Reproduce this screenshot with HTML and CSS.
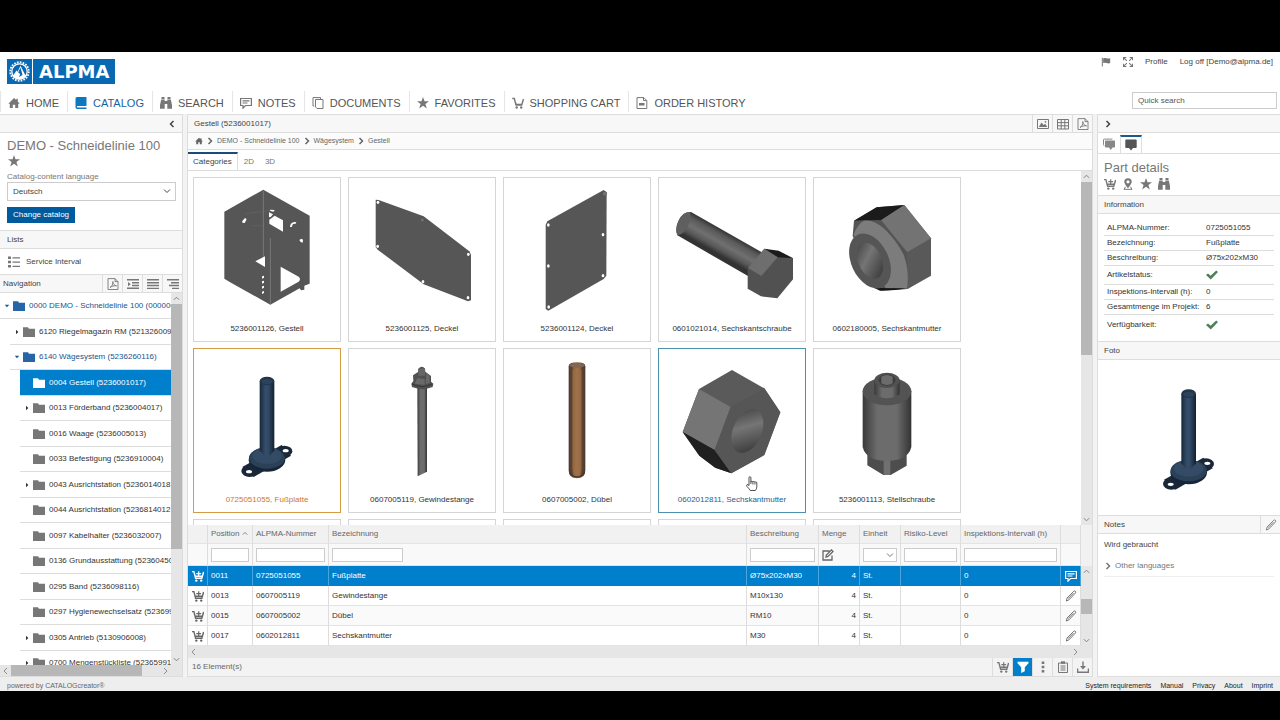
FILE: index.html
```html
<!DOCTYPE html>
<html lang="en">
<head>
<meta charset="utf-8">
<meta name="viewport" content="width=device-width, initial-scale=1">
<title>ALPMA Catalog</title>
<link rel="stylesheet" href="styles.css">
</head>
<body>
<svg class="defs" aria-hidden="true">
  <defs>
    <linearGradient id="shade" x1="0" x2="1"><stop offset="0" stop-color="#3a3a3a"/><stop offset=".3" stop-color="#6c6c6c"/><stop offset=".7" stop-color="#6c6c6c"/><stop offset="1" stop-color="#333"/></linearGradient>
    <linearGradient id="navy" x1="0" x2="1"><stop offset="0" stop-color="#18283b"/><stop offset=".4" stop-color="#344f6b"/><stop offset=".6" stop-color="#314a65"/><stop offset="1" stop-color="#121f30"/></linearGradient>
    <linearGradient id="wood" x1="0" x2="1"><stop offset="0" stop-color="#4a382d"/><stop offset=".22" stop-color="#634634"/><stop offset=".3" stop-color="#8f623f"/><stop offset=".5" stop-color="#a0714a"/><stop offset=".7" stop-color="#8f623f"/><stop offset=".78" stop-color="#634634"/><stop offset="1" stop-color="#4a382d"/></linearGradient>
    <linearGradient id="bolt" gradientUnits="userSpaceOnUse" x1="686" y1="186" x2="650" y2="250"><stop offset="0" stop-color="#2c2c2c"/><stop offset=".25" stop-color="#5a5a5a"/><stop offset=".55" stop-color="#707070"/><stop offset=".8" stop-color="#585858"/><stop offset="1" stop-color="#333"/></linearGradient>
    <linearGradient id="bore" x1="0" y1="0" x2=".5" y2="1"><stop offset="0" stop-color="#3c3c3c"/><stop offset=".5" stop-color="#757575"/><stop offset="1" stop-color="#444"/></linearGradient>
  </defs>
  <symbol id="home" viewBox="0 0 12 12"><path d="M6 1 .3 6.8h1.5V11h3V7.8h2.4V11h3V6.8h1.5L9.8 4.4V1.8H8.300v1.100z"/></symbol>
  <symbol id="book" viewBox="0 0 12 12"><path d="M2 0h9.500v9H2.600q-.8 0-.8.7t.8.7h8.900V12H2.200Q.5 12 .5 10.300V1.600Q.5 0 2 0z"/></symbol>
  <symbol id="binoc" viewBox="0 0 12 12"><path d="M1.500 0h3v2h-3zM7.500 0h3v2h-3zM1.200 2.600h3.500V4h2.600V2.600h3.500L12 8v3.800H7.300V7H4.700v4.800H0V8z"/></symbol>
  <symbol id="note" viewBox="0 0 12 12"><path d="M.6 1.500h10.800v7H5.500L3 11.200V8.500H.6zM2.500 3.800h7M2.500 6h5" fill="none" stroke="currentColor" stroke-width="1.200"/></symbol>
  <symbol id="docs" viewBox="0 0 12 12"><path d="M3.500 2.500H11v9H5L3.500 9.800zM2.200 9H1V.6h7.500v1.700" fill="none" stroke="currentColor"/></symbol>
  <symbol id="star" viewBox="0 0 12 12"><path d="m6 0 1.500 4.300H12L8.400 7l1.400 4.500L6 8.700l-3.800 2.800L3.600 7 0 4.300h4.500z"/></symbol>
  <symbol id="cart" viewBox="0 0 12 12"><path d="M.3 1.500h2l1.700 6.500h5.700L11.500 2M3.500 5.500l.6 2h5" fill="none" stroke="currentColor" stroke-width="1.400"/><circle cx="4.700" cy="10.500" r="1.200"/><circle cx="9.200" cy="10.500" r="1.200"/></symbol>
  <symbol id="cartadd" viewBox="0 0 12 12"><path d="M0 1.600h1.900l1.700 6.700h6.200L11.600 2M3 6.300h7.200" fill="none" stroke="currentColor" stroke-width="1.400"/><path d="M4.300 3.700h4.800M6.700 1.300v4.600" fill="none" stroke="currentColor" stroke-width="1.200"/><circle cx="4.300" cy="10.600" r="1.200"/><circle cx="9.200" cy="10.600" r="1.200"/></symbol>
  <symbol id="order" viewBox="0 0 12 12"><path d="M1 .6h6.800l3 3v7.900H1zM7.500.6v3h3" fill="none" stroke="currentColor"/><path d="M3 6h5.500v2.500H3z"/></symbol>
  <symbol id="flag" viewBox="0 0 12 12"><path d="M1 1h1.200v10.500H1zM2.600 1.500q2.200-.8 4.200 0t4.200 0v5.800q-2.200.8-4.200 0t-4.200 0z"/></symbol>
  <symbol id="expand" viewBox="0 0 12 12"><path d="M.6 4V.6H4M8 .6h3.400V4M11.400 8v3.400H8M4 11.400H.6V8M1 1l3.600 3.600M11 1 7.400 4.600M11 11 7.400 7.400M1 11l3.600-3.600" fill="none" stroke="currentColor" stroke-width="1.300"/></symbol>
  <symbol id="folder" viewBox="0 0 12 10"><path d="M0 .3h5l1 1.500h6V10H0z"/></symbol>
  <symbol id="pdf" viewBox="0 0 12 12"><path d="M1 .6h7l3 3v7.900H1zM8 .6v3h3M3 9.500c2-.8 3-3.500 2.800-6 .2 2.500 1.500 4 3.700 4.300C7 7.600 5 8 3 9.500" fill="none" stroke="currentColor" stroke-width=".9"/></symbol>
  <symbol id="indent" viewBox="0 0 12 12"><path d="M0 1h12v1.500H0zM5 4h7v1.500H5zM5 6.800h7v1.500H5zM0 9.600h12v1.500H0zM1 4l2.800 2.200L1 8.300z"/></symbol>
  <symbol id="lines" viewBox="0 0 12 12"><path d="M0 1h12v1.400H0zM0 4h12v1.400H0zM0 6.800h12v1.400H0zM0 9.700h12v1.400H0z"/></symbol>
  <symbol id="outdent" viewBox="0 0 12 12"><path d="M0 1h12v1.400H0zM4 4h8v1.400H4zM2 6.800h10v1.400H2zM5 9.700h7v1.400H5z"/></symbol>
  <symbol id="list" viewBox="0 0 12 12"><path d="M0 .5h3v2.600H0zM0 4.700h3v2.600H0zM0 8.900h3v2.600H0zM4.500 1.300H12v1.200H4.500zM4.500 5.500H12v1.200H4.500zM4.500 9.700H12v1.200H4.500z"/></symbol>
  <symbol id="image" viewBox="0 0 12 12"><path d="M.5 1.500h11v9H.5z" fill="none" stroke="currentColor"/><path d="m1.800 9 2.700-4.500L6.700 7l1.500-1.300L10.300 9z"/><circle cx="8.500" cy="3.800" r=".9"/></symbol>
  <symbol id="grid" viewBox="0 0 12 12"><path d="M.5 1.500h11v9.500H.5zM.5 4.600h11M.5 7.800h11M4.200 1.500V11M7.800 1.500V11" fill="none" stroke="currentColor"/></symbol>
  <symbol id="bubble" viewBox="0 0 12 12"><path d="M1.200.5h9.600q.9 0 .9.900V8q0 .9-.9.9H8L6 11.500 4 8.900H1.200Q.3 8.900.3 8V1.400q0-.9.9-.9z"/></symbol>
  <symbol id="bubbles" viewBox="0 0 12 12"><path d="M2.800 2.500h8.400q.8 0 .8.800v5.500q0 .8-.8.800H9.500L7.700 12 6 9.600H2.800q-.8 0-.8-.8V3.300q0-.8.8-.8z"/><path d="M1.300 7.500Q.5 7.500.5 6.700V2q0-.9.900-.9h8" fill="none" stroke="currentColor"/></symbol>
  <symbol id="pin" viewBox="0 0 12 12"><path d="M6 .2a3.700 3.700 0 0 1 3.700 3.700C9.700 6 6 10 6 10S2.300 6 2.300 3.900A3.700 3.700 0 0 1 6 .2zm0 2a1.600 1.600 0 1 0 0 3.200 1.600 1.600 0 0 0 0-3.200z" fill-rule="evenodd"/><path d="M3.500 8.800 2 11.300h8L8.500 8.800" fill="none" stroke="currentColor"/></symbol>
  <symbol id="check" viewBox="0 0 12 12"><path d="m0 6 2-1.600 2.600 2.400L10.200 1.500 12 3 4.800 10.500z"/></symbol>
  <symbol id="pencil" viewBox="0 0 12 12"><path d="m1.300 11 .8-3L8.800 1.200q.9-.6 1.600.1.700.8.100 1.600L3.900 9.900zM3 8.700l5.500-5.500" fill="none" stroke="currentColor" stroke-width=".9"/></symbol>
  <symbol id="edit" viewBox="0 0 12 12"><path d="M7.500 2H1v9h9V6.500M4 8l.4-2L9.500.9l1.500 1.500L6 7.500z" fill="none" stroke="currentColor" stroke-width="1.300"/></symbol>
  <symbol id="filter" viewBox="0 0 12 12"><path d="M.5.700h11v1.500L7.800 6.300v4L4.200 12V6.300L.5 2.200z"/></symbol>
  <symbol id="more" viewBox="0 0 12 12"><path d="M4.700.5h2.600V3H4.700zM4.700 4.700h2.600v2.600H4.700zM4.700 9h2.600v2.500H4.700z"/></symbol>
  <symbol id="clip" viewBox="0 0 12 12"><path d="M1.500 2h9v9.500h-9zM3.500 5h5M3.500 7h5M3.500 9h5" fill="none" stroke="currentColor"/><path d="M4 .3h4v2.500H4z"/></symbol>
  <symbol id="download" viewBox="0 0 12 12"><path d="M.6 7.500v3.700h10.800V7.500M6 .5V7" fill="none" stroke="currentColor" stroke-width="1.400"/><path d="M3 5h6L6 8.500z"/></symbol>
  <symbol id="right" viewBox="0 0 6 8"><path d="m1.500 1 3 3-3 3" fill="none" stroke="currentColor" stroke-width="1.500"/></symbol>
  <symbol id="left" viewBox="0 0 6 8"><path d="m4.500 1-3 3 3 3" fill="none" stroke="currentColor" stroke-width="1.500"/></symbol>
  <symbol id="thinright" viewBox="0 0 6 8"><path d="m1.500 1 3 3-3 3" fill="none" stroke="currentColor" stroke-width=".8"/></symbol>
  <symbol id="thinleft" viewBox="0 0 6 8"><path d="m4.500 1-3 3 3 3" fill="none" stroke="currentColor" stroke-width=".8"/></symbol>
  <symbol id="up" viewBox="0 0 8 6"><path d="m1 4.500 3-3 3 3" fill="none" stroke="currentColor"/></symbol>
  <symbol id="down" viewBox="0 0 8 6"><path d="m1 1.500 3 3 3-3" fill="none" stroke="currentColor"/></symbol>
  <symbol id="closed" viewBox="0 0 6 6"><path d="m2 .8 2.400 2.200L2 5.200z"/></symbol>
  <symbol id="open" viewBox="0 0 6 6"><path d="M.8 1.800h4.400L3 4.200z"/></symbol>
  <symbol id="foot" viewBox="151 90 168 315">
    <path d="m160 368 118-66 28 32-112 64z" fill="#1a2738"/>
    <ellipse cx="182" cy="380" rx="25" ry="18" fill="#1a2738"/><ellipse cx="286" cy="321" rx="24" ry="17" fill="#1a2738"/>
    <ellipse cx="234" cy="346" rx="55" ry="36" fill="#16253a"/><ellipse cx="234" cy="341" rx="54" ry="32" fill="#2b4158"/><ellipse cx="234" cy="335" rx="44" ry="24" fill="#334b64"/>
    <ellipse cx="180" cy="382" rx="9" ry="5" fill="#fff"/><ellipse cx="290" cy="319" rx="9" ry="5" fill="#fff"/>
    <path d="M212 110v210q8 4 12 12 10 8 20 0 4-8 12-12V110z" fill="url(#navy)"/><ellipse cx="234" cy="110" rx="22" ry="13" fill="#22354a"/><ellipse cx="234" cy="112" rx="16" ry="8" fill="#2c435b"/>
  </symbol>
</svg>

<div class="app">
  <header class="top">
    <div class="brand-row">
      <a class="logo" href="#" aria-label="ALPMA">
        <svg class="logo-mark" viewBox="0 0 25 25"><circle cx="12.500" cy="12.500" r="9.300" fill="none" stroke="#fff" stroke-width="1.800" stroke-dasharray="1.700 1.220"/><circle cx="12.500" cy="12.500" r="7.700" fill="none" stroke="#fff" stroke-width="1.300"/><path d="m5.500 17.500 4-6 1.200 1.300 2.800-6 5.500 10.700q-6 6-13.500 0z" fill="#fff"/><path d="m13.500 8.500-2.300 5 2 1.500-1.200 3 3.500-2z" fill="#0868b2"/></svg>
        <span class="logo-text">ALPMA</span>
      </a>
      <div class="user-links">
        <button class="plain" aria-label="Language"><svg class="ic10"><use href="#flag"/></svg></button>
        <button class="plain" aria-label="Full screen"><svg class="ic10"><use href="#expand"/></svg></button>
        <a href="#">Profile</a><a href="#">Log off [Demo@alpma.de]</a>
      </div>
    </div>
    <div class="nav-row">
      <nav class="mainnav">
        <a href="#"><svg><use href="#home"/></svg>HOME</a>
        <a href="#" class="current"><svg><use href="#book"/></svg>CATALOG</a>
        <a href="#"><svg><use href="#binoc"/></svg>SEARCH</a>
        <a href="#"><svg><use href="#note"/></svg>NOTES</a>
        <a href="#"><svg><use href="#docs"/></svg>DOCUMENTS</a>
        <a href="#"><svg><use href="#star"/></svg>FAVORITES</a>
        <a href="#"><svg><use href="#cart"/></svg>SHOPPING CART</a>
        <a href="#"><svg><use href="#order"/></svg>ORDER HISTORY</a>
      </nav>
      <input class="quick" type="search" placeholder="Quick search" aria-label="Quick search">
    </div>
  </header>

  <main class="columns">
    <aside class="panel left">
      <div class="head end"><button class="plain cell" aria-label="Collapse"><svg class="chev"><use href="#left"/></svg></button></div>
      <div class="catalog">
        <h1>DEMO - Schneidelinie 100</h1>
        <svg class="ic12 fav"><use href="#star"/></svg>
        <label for="lang">Catalog-content language</label>
        <div class="select wide"><select id="lang"><option>Deutsch</option></select><svg class="arrow"><use href="#down"/></svg></div>
        <button class="primary">Change catalog</button>
      </div>
      <div class="head pad">Lists</div>
      <a class="service" href="#"><svg class="ic12"><use href="#list"/></svg>Service Interval</a>
      <div class="head navhead"><span class="grow">Navigation</span>
        <button class="plain cell" aria-label="PDF"><svg class="ic12"><use href="#pdf"/></svg></button><button class="plain cell" aria-label="Indent"><svg class="ic12"><use href="#indent"/></svg></button><button class="plain cell" aria-label="Expand all"><svg class="ic12"><use href="#lines"/></svg></button><button class="plain cell" aria-label="Collapse all"><svg class="ic12"><use href="#outdent"/></svg></button>
      </div>
      <div class="scroller">
        <div class="tree">
          <a class="row blue tall" href="#"><svg class="tw"><use href="#open"/></svg><svg class="fo"><use href="#folder"/></svg>0000 DEMO - Schneidelinie 100 (000000</a>
          <ul>
            <li><a class="row tall" href="#"><svg class="tw"><use href="#closed"/></svg><svg class="fo"><use href="#folder"/></svg>6120 Riegelmagazin RM (521326009</a></li>
            <li><a class="row blue" href="#"><svg class="tw"><use href="#open"/></svg><svg class="fo"><use href="#folder"/></svg>6140 Wägesystem (5236260116)</a>
              <ul class="leaves">
                <li><a class="row selected" href="#"><svg class="tw"></svg><svg class="fo"><use href="#folder"/></svg>0004 Gestell (5236001017)</a></li>
                <li><a class="row" href="#"><svg class="tw"><use href="#closed"/></svg><svg class="fo"><use href="#folder"/></svg>0013 Förderband (5236004017)</a></li>
                <li><a class="row" href="#"><svg class="tw"></svg><svg class="fo"><use href="#folder"/></svg>0016 Waage (5236005013)</a></li>
                <li><a class="row" href="#"><svg class="tw"></svg><svg class="fo"><use href="#folder"/></svg>0033 Befestigung (5236910004)</a></li>
                <li><a class="row" href="#"><svg class="tw"><use href="#closed"/></svg><svg class="fo"><use href="#folder"/></svg>0043 Ausrichtstation (5236014018</a></li>
                <li><a class="row" href="#"><svg class="tw"></svg><svg class="fo"><use href="#folder"/></svg>0044 Ausrichtstation (5236814012</a></li>
                <li><a class="row" href="#"><svg class="tw"></svg><svg class="fo"><use href="#folder"/></svg>0097 Kabelhalter (5236032007)</a></li>
                <li><a class="row" href="#"><svg class="tw"></svg><svg class="fo"><use href="#folder"/></svg>0136 Grundausstattung (52360450</a></li>
                <li><a class="row" href="#"><svg class="tw"></svg><svg class="fo"><use href="#folder"/></svg>0295 Band (5236098116)</a></li>
                <li><a class="row" href="#"><svg class="tw"></svg><svg class="fo"><use href="#folder"/></svg>0297 Hygienewechselsatz (523699</a></li>
                <li><a class="row" href="#"><svg class="tw"><use href="#closed"/></svg><svg class="fo"><use href="#folder"/></svg>0305 Antrieb (5130906008)</a></li>
                <li><a class="row" href="#"><svg class="tw"><use href="#closed"/></svg><svg class="fo"><use href="#folder"/></svg>0700 Mengenstückliste (52365991</a></li>
              </ul>
            </li>
          </ul>
        </div>
        <div class="vbar"><svg class="cap"><use href="#up"/></svg><div class="track"><i class="thumb tree-thumb"></i></div><svg class="cap"><use href="#down"/></svg></div>
      </div>
      <div class="hbar"><svg class="cap"><use href="#thinleft"/></svg><div class="track"><i class="thumb tree-hthumb"></i></div><svg class="cap"><use href="#thinright"/></svg><span class="corner"></span></div>
    </aside>

    <section class="panel center">
      <div class="head pad"><span class="grow">Gestell (5236001017)</span>
        <button class="plain cell" aria-label="Image"><svg class="ic12"><use href="#image"/></svg></button><button class="plain cell" aria-label="Table"><svg class="ic12"><use href="#grid"/></svg></button><button class="plain cell" aria-label="PDF"><svg class="ic12"><use href="#pdf"/></svg></button>
      </div>
      <nav class="crumbs" aria-label="Breadcrumb"><svg class="ic8"><use href="#home"/></svg><svg class="chev"><use href="#right"/></svg><a href="#">DEMO - Schneidelinie 100</a><svg class="chev"><use href="#right"/></svg><a href="#">Wägesystem</a><svg class="chev"><use href="#right"/></svg><a href="#">Gestell</a></nav>
      <div class="tabs" role="tablist"><button role="tab" aria-selected="true" class="active">Categories</button><button role="tab">2D</button><button role="tab">3D</button></div>
      <div class="scroller">
        <div class="cards">
          <a class="card" href="#"><svg viewBox="15 25 438 423"><path d="m106 126 117-66 139 78v204l-16 6v12l-10 2-4-6-88 49-118-66-20-12z" fill="#565656"/><path d="M223 64v202M244 205v200" stroke="#8b8b8b" stroke-width="2"/><path d="m170 132 74-10M190 168h30" stroke="#777"/><path d="m241 150 16-12 25 14v34l-41-24zM199 275l29-15v32zM275 291l54 30q8 8 0 15l-54 30zM160 154l7-8q6-1 5 5l-5 9-7-1zM240 128l12 6-7 8-5 1zM243 120l14 1-3 5-10-2zM305 163q8-8 17-5l-2 4-8 1-4 9h-5zM331 211l6-4 5 3-1 9-6-2zM219 320l6-2v6l-6 3zM219 335l6-2v6l-6 3zM219 350l6-2v6l-6 3zM219 366l6-2v6l-6 3z" fill="#fff"/></svg><span>5236001126, Gestell</span></a>
          <a class="card" href="#"><svg viewBox="479 25 438 423"><path d="m559 90 9 1 135 49 137 105 5 10v137l-9 3-133-51-138-104-6-8z" fill="#565656"/><g fill="#fff"><ellipse cx="566" cy="98" rx="4" ry="5"/><ellipse cx="565" cy="230" rx="4" ry="5"/><ellipse cx="837" cy="254" rx="4" ry="5"/><ellipse cx="836" cy="384" rx="4" ry="5"/><ellipse cx="701" cy="336" rx="4" ry="5"/></g><circle cx="699" cy="151" r="5" fill="#777" stroke="#444"/></svg><span>5236001125, Deckel</span></a>
          <a class="card" href="#"><svg viewBox="13 25 438 423"><path d="m138 165 5-10 169-94 9 7-1 250-8 10-166 95-8-5z" fill="#565656"/><g fill="#fff"><ellipse cx="146" cy="166" rx="4" ry="5"/><ellipse cx="146" cy="289" rx="4" ry="5"/><ellipse cx="147" cy="412" rx="4" ry="5"/><ellipse cx="310" cy="195" rx="4" ry="5"/><ellipse cx="310" cy="318" rx="4" ry="5"/></g><circle cx="315" cy="72" r="6" fill="#777" stroke="#444"/></svg><span>5236001124, Deckel</span></a>
          <a class="card" href="#"><svg viewBox="479 25 438 423"><path d="m575 127 215 122-44 70-212-122q-8-22 4-45 12-25 37-25z" fill="url(#bolt)"/><path d="M572 127q-20-2-33 24-13 26-5 46 20-4 31-26 12-24 7-44z" fill="#5f5f5f"/><path d="m795 237 86 28v64l-47 57-49-6-40-23v-62l15-12z" fill="#515151"/><path d="m795 237 43 6 42 22-45-2z" fill="#1b1b1b"/><path d="m795 237 40 26-49 56-40-24z" fill="#6e6e6e"/></svg><span>0601021014, Sechskantschraube</span></a>
          <a class="card" href="#"><svg viewBox="41 25 438 423"><path d="m161 153 68-40 83-7 80 100v112l-70 40-80 5z" fill="#595959"/><path d="m161 153 68-40 83-7-70 46z" fill="#1b1b1b"/><path d="m242 152 70-46 80 100-72 42z" fill="#737373"/><path d="m161 153 81-1 78 96 2 108-80 3-85-160z" fill="#545454"/><path d="M160 195q10-30 30-42 30-5 65 27 35 35 55 75 18 50 10 103l-60 4z" fill="#7c7c7c"/><path d="m222 355 98 1-35 5-46 2z" fill="#161616"/><ellipse cx="209" cy="274" rx="56" ry="87" transform="rotate(-25 209 274)" fill="#555"/><ellipse cx="209" cy="273" rx="35" ry="57" transform="rotate(-24 209 273)" fill="url(#bore)"/></svg><span>0602180005, Sechskantmutter</span></a>
          <a class="card marked" href="#"><svg viewBox="15 14 438 423"><use href="#foot" x="151" y="90" width="168" height="315"/></svg><span>0725051055, Fußplatte</span></a>
          <a class="card" href="#"><svg viewBox="479 14 438 423"><path d="M684 125h29v257l-28 14z" fill="url(#shade)"/><path d="m671 93 15-10 1-10q11-12 20 0l1 9 17 13v17l7 6-2 10q-30 13-62 0l-2-10 6-8z" fill="#505050"/><path d="m687 73 20-1v22h-20z" fill="#666"/><path d="m684 101 22 3v18l-30-4zM711 86l10 9v20l-12 5z" fill="#696969"/><path d="M668 119q30 15 60 0" fill="none" stroke="#353535" stroke-width="3"/></svg><span>0607005119, Gewindestange</span></a>
          <a class="card" href="#"><svg viewBox="13 14 438 423"><path d="M207 66q0-12 25-12t25 12v312q0 24-25 24t-25-24z" fill="url(#wood)"/><path d="M208 64q4-9 24-9t24 9q-8 6-24 6t-24-6z" fill="#806654"/><path d="M218 78q14-8 28 0v295q-2 17-14 17t-14-17z" fill="#a0714a" opacity=".5"/><path d="M210 380q4 18 22 18t22-18" fill="none" stroke="#4a382d" stroke-width="4"/></svg><span>0607005002, Dübel</span></a>
          <a class="card hover" href="#"><svg viewBox="479 14 438 423"><path d="m698 77 97 55 48 72-48 128-99 55-49-17-47-36-50-71 49-129z" fill="#5a5a5a"/><path d="m599 134 95 54-48 129-96-54z" fill="#757575"/><path d="m550 263 96 54 50 70-48-17-48-36z" fill="#202020"/><path d="m694 188-48 129 50 70 99-55 48-128-48-72" fill="#565656"/><ellipse cx="744" cy="260" rx="43" ry="69" transform="rotate(23 744 260)" fill="url(#bore)"/></svg><span>0602012811, Sechskantmutter</span>
            <svg class="cursor" viewBox="0 0 12 16"><path d="M3 9V1.700q0-1 .9-1t1 1V6q.1-.7 1-.7t1 1q.1-.8 1-.8t1 1q.1-.7.9-.7t1 1v4q0 2-1.500 3.700h-5Q3.500 13 1 10.500.3 9.300 1 8.700q.9-.6 2 .8zM4.900 6v2M6.900 6.500v2M8.900 7v1.500" fill="#fff" stroke="#222" stroke-width=".8"/></svg></a>
          <a class="card" href="#"><svg viewBox="41 14 438 423"><path d="M201 330h118v34l-48 28h-22l-48-29z" fill="#4d4d4d"/><path d="M250 345h20v47h-20z" fill="#707070"/><path d="M187 140v168q5 25 35 37 38 10 76 0 30-12 35-37V140z" fill="url(#shade)"/><ellipse cx="260" cy="141" rx="73" ry="42" fill="#535353"/><path d="M222 110v40q38 24 76 0v-40z" fill="url(#shade)"/><ellipse cx="260" cy="108" rx="38" ry="23" fill="#515151"/><ellipse cx="260" cy="107" rx="25" ry="17" fill="#3c3c3c"/><path d="M243 97q17-10 34 0v20q-17 10-34 0z" fill="#6c6c6c"/></svg><span>5236001113, Stellschraube</span></a>
          <a class="card" href="#" aria-label="Part 11"></a><a class="card" href="#" aria-label="Part 12"></a><a class="card" href="#" aria-label="Part 13"></a><a class="card" href="#" aria-label="Part 14"></a><a class="card" href="#" aria-label="Part 15"></a>
        </div>
        <div class="vbar"><svg class="cap"><use href="#up"/></svg><div class="track"><i class="thumb card-thumb"></i></div><svg class="cap"><use href="#down"/></svg></div>
      </div>
      <div class="parts">
        <table class="partlist">
          <colgroup><col class="w20"><col class="w45"><col class="w76"><col><col class="w72"><col class="w41"><col class="w41"><col class="w60"><col class="w100"><col class="w20"></colgroup>
          <thead>
            <tr><th></th><th>Position <svg class="sort"><use href="#up"/></svg></th><th>ALPMA-Nummer</th><th>Bezeichnung</th><th>Beschreibung</th><th>Menge</th><th>Einheit</th><th>Risiko-Level</th><th>Inspektions-Intervall (h)</th><th></th></tr>
            <tr class="filters"><td></td><td><input aria-label="Position"></td><td><input aria-label="ALPMA-Nummer"></td><td><input class="short" aria-label="Bezeichnung"></td><td><input aria-label="Beschreibung"></td><td><button class="plain" aria-label="Edit"><svg class="ic12"><use href="#edit"/></svg></button></td><td><div class="select"><select aria-label="Einheit"><option></option></select><svg class="arrow"><use href="#down"/></svg></div></td><td><input aria-label="Risiko-Level"></td><td><input aria-label="Inspektions-Intervall"></td><td></td></tr>
          </thead>
          <tbody>
            <tr class="on"><td><svg class="ic12"><use href="#cartadd"/></svg></td><td>0011</td><td>0725051055</td><td>Fußplatte</td><td>Ø75x202xM30</td><td class="num">4</td><td>St.</td><td></td><td>0</td><td><svg class="ic12"><use href="#note"/></svg></td></tr>
            <tr><td><svg class="ic12"><use href="#cartadd"/></svg></td><td>0013</td><td>0607005119</td><td>Gewindestange</td><td>M10x130</td><td class="num">4</td><td>St.</td><td></td><td>0</td><td><svg class="ic12"><use href="#pencil"/></svg></td></tr>
            <tr class="alt"><td><svg class="ic12"><use href="#cartadd"/></svg></td><td>0015</td><td>0607005002</td><td>Dübel</td><td>RM10</td><td class="num">4</td><td>St.</td><td></td><td>0</td><td><svg class="ic12"><use href="#pencil"/></svg></td></tr>
            <tr><td><svg class="ic12"><use href="#cartadd"/></svg></td><td>0017</td><td>0602012811</td><td>Sechskantmutter</td><td>M30</td><td class="num">4</td><td>St.</td><td></td><td>0</td><td><svg class="ic12"><use href="#pencil"/></svg></td></tr>
          </tbody>
        </table>
        <div class="vbar"><svg class="cap"><use href="#up"/></svg><div class="track centered"><i class="thumb part-thumb"></i></div><svg class="cap"><use href="#down"/></svg></div>
      </div>
      <div class="hbar"><svg class="cap"><use href="#thinleft"/></svg><div class="track"></div><svg class="cap"><use href="#thinright"/></svg><span class="corner"></span></div>
      <div class="count"><span class="grow">16 Element(s)</span>
        <button class="plain cell" aria-label="Add to cart"><svg class="ic12"><use href="#cartadd"/></svg></button><button class="plain cell pressed" aria-label="Filter"><svg class="ic12"><use href="#filter"/></svg></button><button class="plain cell" aria-label="More"><svg class="ic12"><use href="#more"/></svg></button><button class="plain cell" aria-label="Clipboard"><svg class="ic12"><use href="#clip"/></svg></button><button class="plain cell" aria-label="Download"><svg class="ic12"><use href="#download"/></svg></button>
      </div>
    </section>

    <aside class="panel right">
      <div class="head start"><button class="plain cell" aria-label="Collapse"><svg class="chev"><use href="#right"/></svg></button></div>
      <div class="itabs" role="tablist"><button role="tab" aria-label="All comments"><svg class="ic12"><use href="#bubbles"/></svg></button><button role="tab" aria-selected="true" class="active" aria-label="Details"><svg class="ic12"><use href="#bubble"/></svg></button></div>
      <div class="detail-title">
        <h2>Part details</h2>
        <div class="acts"><button class="plain" aria-label="Add to cart"><svg class="ic12"><use href="#cartadd"/></svg></button><button class="plain" aria-label="Locate"><svg class="ic12"><use href="#pin"/></svg></button><button class="plain" aria-label="Favorite"><svg class="ic12"><use href="#star"/></svg></button><button class="plain" aria-label="Search"><svg class="ic12"><use href="#binoc"/></svg></button></div>
      </div>
      <div class="head pad">Information</div>
      <table class="props">
        <tr><th>ALPMA-Nummer:</th><td>0725051055</td></tr>
        <tr><th>Bezeichnung:</th><td>Fußplatte</td></tr>
        <tr><th>Beschreibung:</th><td>Ø75x202xM30</td></tr>
        <tr class="status"><th>Artikelstatus:</th><td><svg class="ic12 ok"><use href="#check"/></svg></td></tr>
        <tr><th>Inspektions-Intervall (h):</th><td>0</td></tr>
        <tr><th>Gesamtmenge im Projekt:</th><td>6</td></tr>
        <tr class="status"><th>Verfügbarkeit:</th><td><svg class="ic12 ok"><use href="#check"/></svg></td></tr>
      </table>
      <div class="head pad">Foto</div>
      <div class="photo"><svg><use href="#foot"/></svg></div>
      <div class="head pad"><span class="grow">Notes</span><button class="plain cell" aria-label="Edit note"><svg class="ic12"><use href="#pencil"/></svg></button></div>
      <div class="notes"><p>Wird gebraucht</p><a href="#"><svg class="chev"><use href="#right"/></svg>Other languages</a></div>
    </aside>
  </main>

  <footer class="foot"><span class="grow">powered by CATALOGcreator®</span><a href="#">System requirements</a><a href="#">Manual</a><a href="#">Privacy</a><a href="#">About</a><a href="#">Imprint</a></footer>
</div>
</body>
</html>
```
FILE: styles.css
```css
*, *::before, *::after { box-sizing: border-box; }
body {
  margin: 0;
  background: #000;
  font: 8px/10px "Liberation Sans", Arial, sans-serif;
  color: #444;
}
a { color: inherit; text-decoration: none; }
h1, h2, p, ul { margin: 0; padding: 0; font-weight: normal; }
ul { list-style: none; }
button, input, select { font: inherit; color: inherit; margin: 0; border-radius: 0; }
svg { display: block; flex: none; fill: currentColor; }
.defs { position: absolute; width: 0; height: 0; }
.grow { flex: 1; }
.ic8 { width: 8px; height: 8px; }
.ic10 { width: 10px; height: 10px; }
.ic12 { width: 12px; height: 12px; }
.chev { width: 6px; height: 8px; }
.plain { display: flex; align-items: center; justify-content: center; padding: 0; border: 0; background: none; color: #777; }

.app { height: 100vh; min-height: 480px; padding: 52px 0 29px; display: flex; flex-direction: column; }
.top { background: #fff; }
.brand-row { display: flex; justify-content: space-between; align-items: flex-start; height: 39px; padding: 7px 7px 0; }
.logo { display: flex; gap: 1px; height: 25px; }
.logo-mark { width: 25px; height: 25px; background: #0868b2; }
.logo-text { display: flex; align-items: center; padding: 0 6px; background: #0868b2; color: #fff; font: bold 18px/25px "DejaVu Sans", sans-serif; }
.user-links { display: flex; align-items: center; gap: 12px; height: 6px; }
.nav-row { display: flex; justify-content: space-between; align-items: flex-start; height: 23px; padding-right: 3px; }
.mainnav { display: flex; }
.mainnav a { display: flex; align-items: center; gap: 6px; height: 21px; padding: 2px 8px 0 7px; border-left: 1px solid #e6e6e6; font-size: 11px; color: #555; }
.mainnav svg { width: 12px; height: 12px; color: #777; }
.mainnav .current { color: #1b629d; }
.mainnav .current svg { color: #0b78c0; }
.quick { width: 145px; height: 17px; margin-top: 1px; padding: 0 5px; border: 1px solid #ccc; background: #fff; appearance: none; }
.quick::placeholder { color: #555; opacity: 1; }

.columns { flex: 1; min-height: 0; display: grid; grid-template-columns: 183px minmax(0, 1fr) 183px; gap: 4px; background: #f3f3f3; }
.panel { display: flex; flex-direction: column; min-height: 0; min-width: 0; background: #fff; border-bottom: 1px solid #ddd; overflow: hidden; }
.left { border-right: 1px solid #ddd; }
.center { border-left: 1px solid #ddd; border-right: 1px solid #ddd; }
.right { border-left: 1px solid #ddd; }
.head { flex: none; display: flex; align-items: center; height: 19px; border-top: 1px solid #ddd; border-bottom: 1px solid #ddd; background: #f7f7f7; }
.pad { padding-left: 6px; }
.end { justify-content: flex-end; }
.cell { width: 20px; height: 17px; border-left: 1px solid #ddd; }
.end .cell, .start .cell { border-left: 0; color: #444; }

.catalog { display: flex; flex-direction: column; align-items: flex-start; padding: 4px 6px 7px 7px; }
h1, h2 { font-size: 13px; line-height: 18px; color: #777; white-space: nowrap; }
.fav { width: 14px; color: #777; }
.catalog label { margin-top: 4px; line-height: 11px; color: #777; }
.select { position: relative; height: 14px; }
.select select { display: block; width: 100%; height: 100%; padding: 0 5px; border: 1px solid #ccc; background: #fff; appearance: none; }
.select .arrow { position: absolute; right: 3px; top: 4px; width: 8px; height: 6px; pointer-events: none; }
.wide { width: 169px; height: 19px; }
.wide .arrow { right: 5px; top: 6px; }
.primary { height: 16px; margin-top: 6px; padding: 0 6px; border: 0; background: #005b9e; color: #fff; }
.left .pad { padding-left: 7px; }
.navhead { padding-left: 3px; }
.service { flex: none; display: flex; align-items: center; gap: 6px; height: 25px; padding-left: 8px; }
.service svg { color: #777; }

.scroller { flex: 1; min-height: 0; display: flex; overflow: hidden; }
.tree { flex: 1; min-width: 0; overflow: hidden; }
.tree ul { padding-left: 10px; }
.row { display: flex; align-items: center; height: 25px; padding-left: 4px; border-bottom: 1px solid #ddd; white-space: nowrap; color: #333; }
.tall, .leaves li:nth-child(odd) .row { height: 26px; }
.row .tw { width: 6px; height: 6px; margin-right: 3px; }
.row .fo { width: 12px; height: 10px; margin-right: 4px; color: #777; }
.row.blue { color: #1a5490; }
.row.blue .fo { color: #2666a8; }
.row.selected, .row.selected .fo { background: #007fcc; color: #fff; }

.vbar { flex: none; display: flex; flex-direction: column; align-items: center; width: 11px; background: #e6e6e6; color: #777; }
.vbar .cap { width: 7px; height: 11px; }
.track { flex: 1; align-self: stretch; min-width: 0; }
.thumb { display: block; background: #b7b7b7; }
.tree-thumb { height: 70%; }
.card-thumb { height: 52%; }
.part-thumb { height: 15px; }
.centered { display: flex; flex-direction: column; justify-content: center; }
.hbar { flex: none; display: flex; align-items: center; height: 11px; background: #e6e6e6; color: #777; }
.hbar .cap { width: 11px; height: 8px; }
.hbar .thumb { height: 11px; }
.tree-hthumb { width: 88%; }
.corner { width: 11px; }

.crumbs { flex: none; display: flex; align-items: center; gap: 4px; height: 17px; padding-left: 7px; border-bottom: 1px solid #ddd; background: #fbfbfb; font-size: 7px; color: #666; }
.tabs { flex: none; display: flex; align-items: flex-end; height: 21px; border-bottom: 1px solid #ddd; }
.tabs button { height: 18px; padding: 2px 5px 0 6px; border: 0; background: none; color: #777; }
.tabs .active { padding: 0 5px; border-top: 2px solid #1b4a7d; border-right: 1px solid #ddd; color: #444; }

.cards { flex: 1; display: grid; grid-template-columns: repeat(auto-fill, 148px); grid-auto-rows: 165px; gap: 6px 7px; align-content: start; padding: 6px 5px; }
.card { position: relative; border: 1px solid #d5d5d5; text-align: center; color: #333; }
.card > svg:first-child { width: 146px; height: 141px; }
.card span { display: block; line-height: 20px; }
.card.marked { border-color: #d59a45; color: #d2752a; }
.card.hover { border-color: #4b91ae; color: #1d618f; }
.card .cursor { position: absolute; left: 87px; top: 127px; width: 12px; height: 16px; }

.parts { flex: none; display: flex; background: #f1f1f1; }
.partlist { flex: 1; min-width: 0; border-collapse: separate; border-spacing: 0; table-layout: fixed; background: #fff; }
.w20 { width: 20px; } .w45 { width: 45px; } .w76 { width: 76px; } .w72 { width: 72px; }
.w41 { width: 41px; } .w60 { width: 60px; } .w100 { width: 100px; }
.partlist th, .partlist td { height: 20px; padding: 0 3px; border-right: 1px solid #ddd; border-bottom: 1px solid #e4e4e4; text-align: left; font-weight: normal; white-space: nowrap; }
.partlist th { height: 19px; background: #f1f1f1; color: #666; }
.partlist .filters td { height: 22px; background: #f9f9f9; }
.partlist tbody td { color: #333; }
.partlist tbody td:first-child, .partlist tbody td:last-child { padding-left: 4px; }
.partlist td svg { color: #666; }
.partlist .alt td { background: #fafafa; }
.partlist .on td { background: #007fcc; border-bottom-color: #007fcc; border-right-color: #4aa5dd; color: #fff; }
.partlist .on svg { color: #fff; }
.partlist .num { text-align: right; }
.partlist input { display: block; width: 100%; height: 14px; padding: 0 2px; border: 1px solid #ccc; background: #fff; }
.partlist input.short { width: 71px; }
.partlist .select .arrow { color: #777; }
.partlist .sort { display: inline-block; width: 6px; height: 5px; }
.parts .vbar { margin-top: 41px; }
.center .hbar { height: 12px; }
.count { flex: none; display: flex; align-items: center; height: 18px; padding-left: 4px; background: #f3f3f3; color: #666; }
.count .cell { height: 18px; }
.count .pressed { background: #007fcc; color: #fff; }

.itabs { flex: none; display: flex; align-items: flex-end; height: 21px; border-bottom: 1px solid #ddd; }
.itabs button { display: flex; align-items: center; justify-content: center; width: 22px; height: 18px; padding: 0; border: 0; background: none; color: #888; }
.itabs .active { border-top: 2px solid #1b5a8d; border-left: 1px solid #ddd; border-right: 1px solid #ddd; color: #555; }
.detail-title { padding: 5px 6px; }
.acts { display: flex; gap: 6px; padding-top: 1px; }
.acts .plain { height: 12px; }
.props { margin: 7px 6px; border-collapse: separate; border-spacing: 0; table-layout: fixed; }
.props th, .props td { height: 15px; padding: 0 3px; border-bottom: 1px solid #ddd; text-align: left; font-weight: normal; white-space: nowrap; color: #333; }
.props th { width: 99px; }
.props .status th, .props .status td { height: 19px; }
.props tr:last-child th, .props tr:last-child td { border-bottom: 0; }
.ok { color: #4d7f58; }
.photo { flex: none; display: flex; justify-content: center; padding: 27px 0 23px; }
.photo svg { width: 56px; height: 105px; }
.notes { margin: 0 6px; padding-bottom: 5px; border-bottom: 1px solid #eee; color: #444; }
.notes p { padding: 6px 0 11px; }
.notes a { display: flex; align-items: center; gap: 4px; padding-left: 1px; color: #777; }

.foot { display: flex; align-items: center; gap: 9px; height: 14px; padding: 3px 7px 0; background: #eee; font-size: 7px; color: #222; }
.foot .grow { color: #666; }
```
